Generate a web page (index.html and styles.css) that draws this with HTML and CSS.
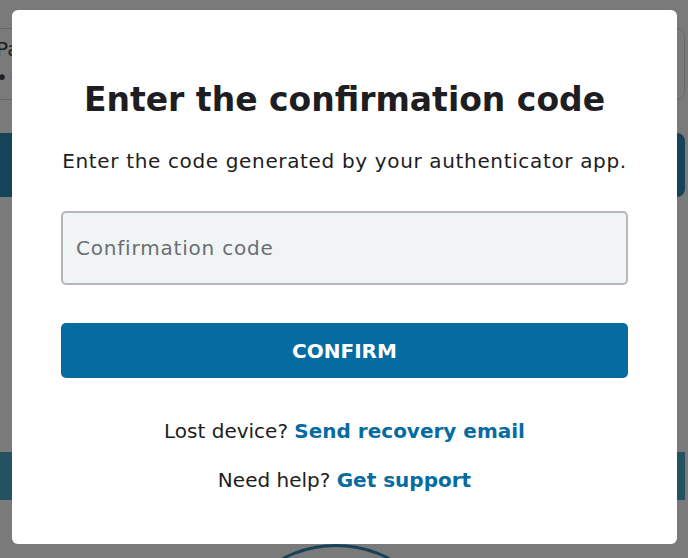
FILE: index.html
```html
<!DOCTYPE html>
<html lang="en">
<head>
  <meta charset="UTF-8" />
  <meta name="viewport" content="width=device-width, initial-scale=1.0" />
  <title>Enter the confirmation code</title>
  <link rel="stylesheet" href="styles.css">
</head>
<body>
  <div class="page">
    <div class="card">
      <span class="card-label">Pa</span>
      <span class="card-dots">&bull;&bull;&bull;</span>
    </div>
    <div class="page-button"></div>
    <div class="page-bar"></div>
    <div class="page-ring"></div>
  </div>

  <div class="backdrop"></div>

  <div class="modal">
    <h1>Enter the confirmation code</h1>
    <p class="lead">Enter the code generated by your authenticator app.</p>
    <input class="code-input" type="text" placeholder="Confirmation code" />
    <button class="confirm">CONFIRM</button>
    <p class="help">Lost device? <a href="#">Send recovery email</a></p>
    <p class="help">Need help? <a href="#">Get support</a></p>
  </div>
</body>
</html>
```
FILE: styles.css
```css
:root {
  --primary: #066ba1;
  --text: #1d1d22;
  --muted: #6b6e70;
}

* { box-sizing: border-box; margin: 0; padding: 0; }
html, body {
  height: 100%;
  overflow: hidden;
  font-family: "DejaVu Sans", Inter, sans-serif;
  color: var(--text);
}

body { position: relative; background: #fff; }

/* page behind the dialog */
.page {
  width: 702px;
  height: 100%;
  overflow: hidden;
  margin-left: -17px;
  padding-top: 28px;
  display: flex;
  flex-direction: column;
}

.card {
  flex-shrink: 0;
  height: 72px;
  border: 1px solid #dadada;
  border-radius: 8px;
  padding: 6px 0 0 12px;
  display: flex;
  flex-direction: column;
  font-size: 20px;
  line-height: 28px;
  color: #444;
}

.card-dots { letter-spacing: 1px; }

.page-button {
  flex-shrink: 0;
  margin-top: 33px;
  height: 64px;
  background: #2f8db8;
  border-radius: 8px;
}

.page-bar {
  flex-shrink: 0;
  margin-top: 255px;
  height: 48px;
  background: #4aaec8;
}

.page-ring {
  flex-shrink: 0;
  margin: 44px auto 0;
  position: relative;
  left: 2px;
  width: 230px;
  height: 230px;
  border: 3px solid #2f8db8;
  border-radius: 50%;
}

.backdrop {
  position: absolute;
  inset: 0;
  background: rgba(0, 0, 0, 0.52);
}

/* dialog */
.modal {
  position: absolute;
  top: 10px;
  left: 12px;
  width: 665px;
  height: 534px;
  background: #fff;
  border-radius: 6px;
  padding: 64px 49px 0;
  display: flex;
  flex-direction: column;
  align-items: center;
}

h1 {
  font-size: 33px;
  font-weight: 700;
  line-height: 52px;
}

.lead {
  margin-top: 20px;
  font-size: 20px;
  line-height: 30px;
  letter-spacing: 0.65px;
  white-space: nowrap;
}

.code-input {
  margin-top: 35px;
  width: 100%;
  height: 74px;
  flex-shrink: 0;
  background: #f1f4f5;
  border: 2px solid #b5b8ba;
  border-radius: 5px;
  padding: 0 13px;
  font: inherit;
  font-size: 20px;
  letter-spacing: 0.8px;
  color: var(--text);
}

.code-input::placeholder { color: var(--muted); }

.confirm {
  margin-top: 38px;
  width: 100%;
  height: 55px;
  flex-shrink: 0;
  border: none;
  border-radius: 5px;
  background: var(--primary);
  color: #fff;
  font: inherit;
  font-size: 20px;
  font-weight: 700;
}

.help {
  font-size: 20px;
  line-height: 30px;
  margin-top: 38px;
}

.help + .help { margin-top: 19px; }

.help a {
  color: var(--primary);
  font-weight: 700;
  text-decoration: none;
}
```
